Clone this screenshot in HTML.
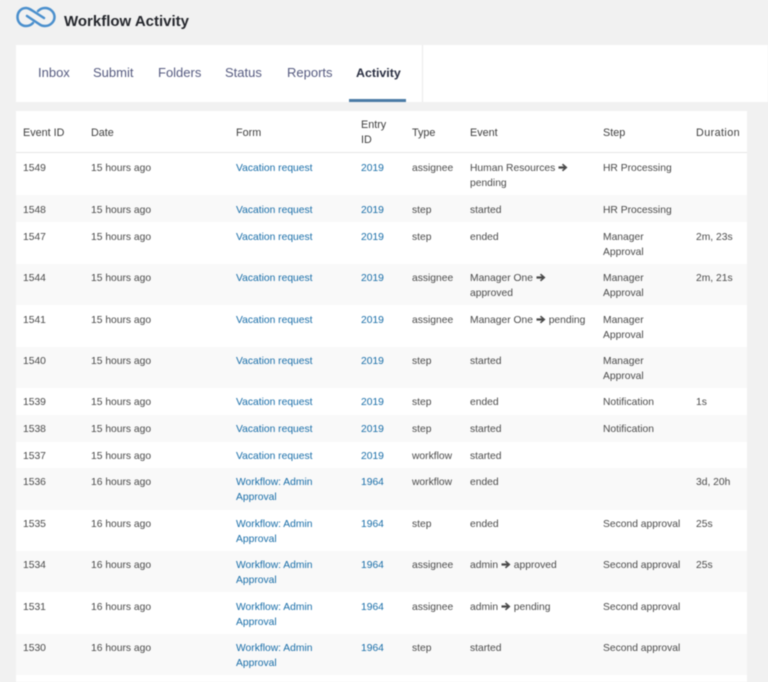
<!DOCTYPE html>
<html><head><meta charset="utf-8"><style>
html,body{margin:0;padding:0;background:#f1f1f1}
body{width:768px;height:682px;overflow:hidden;position:relative;font-family:"Liberation Sans",sans-serif;color:#555}
#p{position:absolute;left:0;top:0;width:768px;height:682px;background:#f1f1f1;filter:blur(.4px)}
.a{position:absolute;white-space:nowrap}
.r{position:absolute;left:16px;width:731px}
.r.s{background:#f9f9f9}.r.w{background:#fff}
.c{position:absolute;top:8px;font-size:10.3px;line-height:15px;white-space:nowrap;color:#4a4a4a}
.r.m .c{top:7px}
.c.l{color:#186da8}
.c1{left:7px}.c2{left:75px}.c3{left:220px}.c4{left:345px}.c5{left:396px}.c6{left:454px}.c7{left:587px}.c8{left:680px}
.r .h{color:#3e3e3e;font-size:10.8px;top:15px}
.t{position:absolute;top:65px;font-size:13px;line-height:15px;color:#565b80}
svg.ar{display:inline-block;vertical-align:-1px;width:10px;height:9px}
</style></head><body><div id="p">
<svg class="a" style="left:0;top:0" width="60" height="34" viewBox="0 0 60 34" fill="none" stroke="#4a8fcd" stroke-width="2.500" stroke-linecap="round"><path d="M44 18 33 11C30 9 28 8 26 8 21 8 17.500 12 17.500 17 17.500 22 21 26 26 26 29 26 31 25 33 23"/><path d="M27 16 39 24C41 25.500 43 26 45 26 50 26 54.500 22 54.500 17 54.500 12 50 8 45 8 42 8 40 9 38 11"/></svg>
<div class="a" style="left:64px;top:13px;font-size:15px;line-height:18px;font-weight:bold;color:#25272d">Workflow Activity</div>
<div class="a" style="left:16px;top:45px;width:752px;height:57px;background:#fff"></div>
<div class="a" style="left:422px;top:45px;width:1px;height:57px;background:#eaeaea"></div>
<div class="t" style="left:38px">Inbox</div>
<div class="t" style="left:93px">Submit</div>
<div class="t" style="left:158px">Folders</div>
<div class="t" style="left:225px">Status</div>
<div class="t" style="left:287px">Reports</div>
<div class="t" style="left:356px;top:66px;color:#2a2f42;font-weight:bold;font-size:12.4px">Activity</div>
<div class="a" style="left:349px;top:99px;width:57px;height:3px;background:#4a7ba6"></div>

<div class="r w" style="top:111px;height:41px;border-bottom:1px solid #e5e5e5">
<div class="c h c1">Event ID</div><div class="c h c2">Date</div><div class="c h c3">Form</div><div class="c h c4" style="top:7px">Entry<br>ID</div><div class="c h c5">Type</div><div class="c h c6">Event</div><div class="c h c7">Step</div><div class="c h c8" style="letter-spacing:.4px">Duration</div>
</div>

<div class="r w" style="top:153px;height:42px"><div class="c c1">1549</div><div class="c c2">15 hours ago</div><div class="c c3 l">Vacation request</div><div class="c c4 l">2019</div><div class="c c5">assignee</div><div class="c c6">Human Resources <svg class="ar" viewBox="0 0 10 9"><path d="M5 .6 9.500 4.500 5 8.400 3.900 7.300 5.800 5.600H.5V3.400H5.800L3.900 1.700Z" fill="#4a4a4a"/></svg><br>pending</div><div class="c c7">HR Processing</div></div>

<div class="r s" style="top:195px;height:27px"><div class="c c1">1548</div><div class="c c2">15 hours ago</div><div class="c c3 l">Vacation request</div><div class="c c4 l">2019</div><div class="c c5">step</div><div class="c c6">started</div><div class="c c7">HR Processing</div></div>

<div class="r w" style="top:222px;height:42px"><div class="c c1">1547</div><div class="c c2">15 hours ago</div><div class="c c3 l">Vacation request</div><div class="c c4 l">2019</div><div class="c c5">step</div><div class="c c6">ended</div><div class="c c7">Manager<br>Approval</div><div class="c c8">2m, 23s</div></div>

<div class="r s m" style="top:264px;height:41px"><div class="c c1">1544</div><div class="c c2">15 hours ago</div><div class="c c3 l">Vacation request</div><div class="c c4 l">2019</div><div class="c c5">assignee</div><div class="c c6">Manager One <svg class="ar" viewBox="0 0 10 9"><path d="M5 .6 9.500 4.500 5 8.400 3.900 7.300 5.800 5.600H.5V3.400H5.800L3.900 1.700Z" fill="#4a4a4a"/></svg><br>approved</div><div class="c c7">Manager<br>Approval</div><div class="c c8">2m, 21s</div></div>

<div class="r w" style="top:305px;height:42px"><div class="c c1">1541</div><div class="c c2">15 hours ago</div><div class="c c3 l">Vacation request</div><div class="c c4 l">2019</div><div class="c c5">assignee</div><div class="c c6">Manager One <svg class="ar" viewBox="0 0 10 9"><path d="M5 .6 9.500 4.500 5 8.400 3.900 7.300 5.800 5.600H.5V3.400H5.800L3.900 1.700Z" fill="#4a4a4a"/></svg> pending</div><div class="c c7">Manager<br>Approval</div></div>

<div class="r s m" style="top:347px;height:41px"><div class="c c1">1540</div><div class="c c2">15 hours ago</div><div class="c c3 l">Vacation request</div><div class="c c4 l">2019</div><div class="c c5">step</div><div class="c c6">started</div><div class="c c7">Manager<br>Approval</div></div>

<div class="r w m" style="top:388px;height:27px"><div class="c c1">1539</div><div class="c c2">15 hours ago</div><div class="c c3 l">Vacation request</div><div class="c c4 l">2019</div><div class="c c5">step</div><div class="c c6">ended</div><div class="c c7">Notification</div><div class="c c8">1s</div></div>

<div class="r s m" style="top:415px;height:27px"><div class="c c1">1538</div><div class="c c2">15 hours ago</div><div class="c c3 l">Vacation request</div><div class="c c4 l">2019</div><div class="c c5">step</div><div class="c c6">started</div><div class="c c7">Notification</div></div>

<div class="r w m" style="top:442px;height:26px"><div class="c c1">1537</div><div class="c c2">15 hours ago</div><div class="c c3 l">Vacation request</div><div class="c c4 l">2019</div><div class="c c5">workflow</div><div class="c c6">started</div></div>

<div class="r s m" style="top:468px;height:42px"><div class="c c1">1536</div><div class="c c2">16 hours ago</div><div class="c c3 l">Workflow: Admin<br>Approval</div><div class="c c4 l">1964</div><div class="c c5">workflow</div><div class="c c6">ended</div><div class="c c8">3d, 20h</div></div>

<div class="r w m" style="top:510px;height:41px"><div class="c c1">1535</div><div class="c c2">16 hours ago</div><div class="c c3 l">Workflow: Admin<br>Approval</div><div class="c c4 l">1964</div><div class="c c5">step</div><div class="c c6">ended</div><div class="c c7">Second approval</div><div class="c c8">25s</div></div>

<div class="r s m" style="top:551px;height:41px"><div class="c c1">1534</div><div class="c c2">16 hours ago</div><div class="c c3 l">Workflow: Admin<br>Approval</div><div class="c c4 l">1964</div><div class="c c5">assignee</div><div class="c c6">admin <svg class="ar" viewBox="0 0 10 9"><path d="M5 .6 9.500 4.500 5 8.400 3.900 7.300 5.800 5.600H.5V3.400H5.800L3.900 1.700Z" fill="#4a4a4a"/></svg> approved</div><div class="c c7">Second approval</div><div class="c c8">25s</div></div>

<div class="r w" style="top:592px;height:42px"><div class="c c1">1531</div><div class="c c2">16 hours ago</div><div class="c c3 l">Workflow: Admin<br>Approval</div><div class="c c4 l">1964</div><div class="c c5">assignee</div><div class="c c6">admin <svg class="ar" viewBox="0 0 10 9"><path d="M5 .6 9.500 4.500 5 8.400 3.900 7.300 5.800 5.600H.5V3.400H5.800L3.900 1.700Z" fill="#4a4a4a"/></svg> pending</div><div class="c c7">Second approval</div></div>

<div class="r s m" style="top:634px;height:41px"><div class="c c1">1530</div><div class="c c2">16 hours ago</div><div class="c c3 l">Workflow: Admin<br>Approval</div><div class="c c4 l">1964</div><div class="c c5">step</div><div class="c c6">started</div><div class="c c7">Second approval</div></div>

<div class="r w" style="top:675px;height:7px"></div>
</div></body></html>
